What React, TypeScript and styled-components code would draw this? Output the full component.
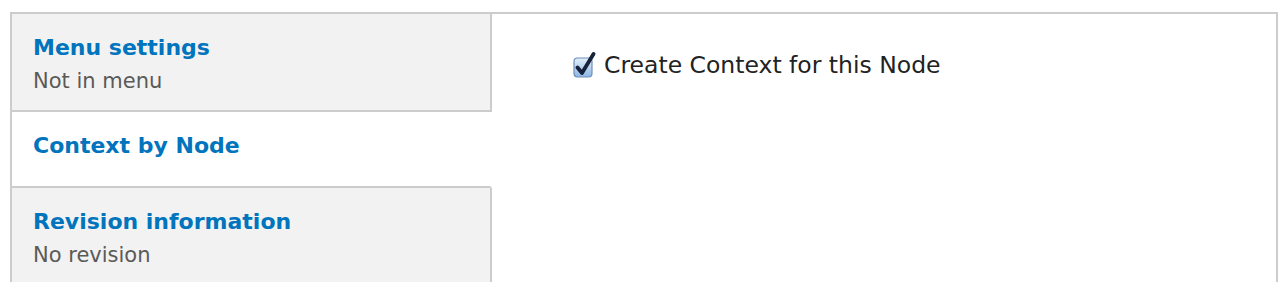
import React from "react";
import styled, { createGlobalStyle } from "styled-components";

const Global = createGlobalStyle`
  html, body { margin: 0; padding: 0; background: #fff; }
  body { font-family: "DejaVu Sans", "Liberation Sans", sans-serif; }
`;

const Page = styled.div`
  padding: 12px 10px 0 10px;
  height: 282px;
  box-sizing: border-box;
  overflow: hidden;
`;

const Tabs = styled.div`
  display: flex;
  border: 2px solid #ccc;
  height: 400px;
`;

const TabList = styled.ul`
  list-style: none;
  margin: 0;
  padding: 0;
  width: 480px;
  flex: none;
  display: flex;
  flex-direction: column;
`;

const Tab = styled.li<{ $active?: boolean; $h: number; $grow?: boolean }>`
  box-sizing: border-box;
  height: ${(p) => p.$h}px;
  flex: ${(p) => (p.$grow ? "1 1 auto" : "none")};
  background: ${(p) => (p.$active ? "#fff" : "#f2f2f2")};
  border-right: 2px solid ${(p) => (p.$active ? "#fff" : "#ccc")};
  border-bottom: ${(p) => (p.$grow ? "0" : "2px solid #ccc")};
  padding: 21px 0 0 21px;
`;

const TabTitle = styled.a`
  display: block;
  color: #0074bd;
  font-weight: bold;
  font-size: 22px;
  line-height: 26px;
  text-decoration: none;
`;

const TabSummary = styled.div`
  color: #5a5a58;
  font-size: 21px;
  line-height: 26px;
  margin-top: 7px;
`;

const Pane = styled.div`
  flex: 1;
  padding: 38px 0 0 81px;
`;

const CheckRow = styled.label`
  display: flex;
  align-items: flex-end;
  gap: 7px;
  color: #222;
  font-size: 23.5px;
  line-height: 26px;
`;

const CheckIcon = () => (
  <svg width="24" height="26" viewBox="0 0 24 26" style={{ flex: "none" }}>
    <defs>
      <linearGradient id="cbg" x1="0" y1="0" x2="0" y2="1">
        <stop offset="0" stopColor="#e4effb" />
        <stop offset="1" stopColor="#8db6e6" />
      </linearGradient>
    </defs>
    <rect x="1" y="6" width="18" height="19" rx="3.5" fill="url(#cbg)" stroke="#6f8fb8" strokeWidth="1.2" />
    <path d="M4.5 15.5 L9 21 L20.5 2" fill="none" stroke="#16213a" strokeWidth="3.8" strokeLinecap="round" strokeLinejoin="round" />
  </svg>
);

export default function App() {
  return (
    <>
      <Global />
      <Page>
        <Tabs>
          <TabList>
            <Tab $h={98}>
              <TabTitle href="#">Menu settings</TabTitle>
              <TabSummary>Not in menu</TabSummary>
            </Tab>
            <Tab $h={76} $active>
              <TabTitle href="#">Context by Node</TabTitle>
            </Tab>
            <Tab $h={98} $grow>
              <TabTitle href="#">Revision information</TabTitle>
              <TabSummary>No revision</TabSummary>
            </Tab>
          </TabList>
          <Pane>
            <CheckRow>
              <CheckIcon />
              Create Context for this Node
            </CheckRow>
          </Pane>
        </Tabs>
      </Page>
    </>
  );
}
